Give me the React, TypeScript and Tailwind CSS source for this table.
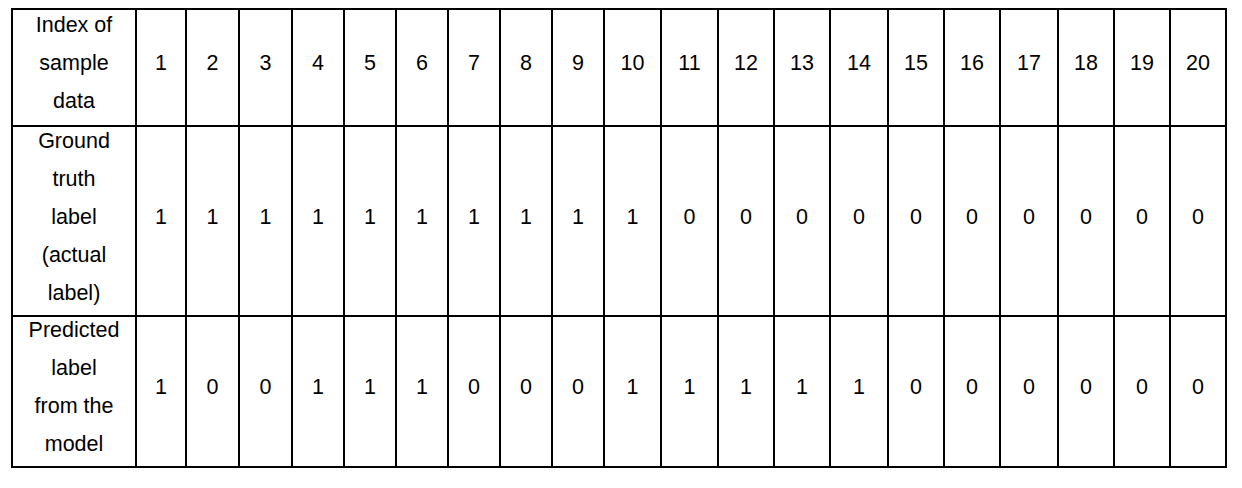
import React from "react";

const idx = Array.from({ length: 20 }, (_, i) => String(i + 1));
const truth = ["1","1","1","1","1","1","1","1","1","1","0","0","0","0","0","0","0","0","0","0"];
const pred = ["1","0","0","1","1","1","0","0","0","1","1","1","1","1","0","0","0","0","0","0"];

function Cell({ children }: { children: React.ReactNode }) {
  return (
    <div className="bg-white flex items-center justify-center text-center pb-[9px]">
      {children}
    </div>
  );
}

function Label({ lines }: { lines: string[] }) {
  return (
    <div className="bg-white flex flex-col items-center justify-center text-center pb-[9px]">
      {lines.map((l, i) => (
        <span key={i}>{l}</span>
      ))}
    </div>
  );
}

export default function App() {
  return (
    <div className="w-[1242px] h-[488px] bg-white pl-[11px] pt-[8px] text-black text-[21.5px] leading-[38px] font-['Liberation_Sans',Arial,sans-serif]">
      <div className="grid w-fit bg-black gap-[2px] p-[2px] grid-cols-[122px_48px_51px_51px_50px_50px_50px_50px_50px_50px_55px_55px_54px_54px_56px_54px_54px_56px_54px_54px_54px] grid-rows-[115px_188px_149px]">
        <Label lines={["Index of", "sample", "data"]} />
        {idx.map((v, i) => (
          <Cell key={"a" + i}>{v}</Cell>
        ))}
        <Label lines={["Ground", "truth", "label", "(actual", "label)"]} />
        {truth.map((v, i) => (
          <Cell key={"b" + i}>{v}</Cell>
        ))}
        <Label lines={["Predicted", "label", "from the", "model"]} />
        {pred.map((v, i) => (
          <Cell key={"c" + i}>{v}</Cell>
        ))}
      </div>
    </div>
  );
}
